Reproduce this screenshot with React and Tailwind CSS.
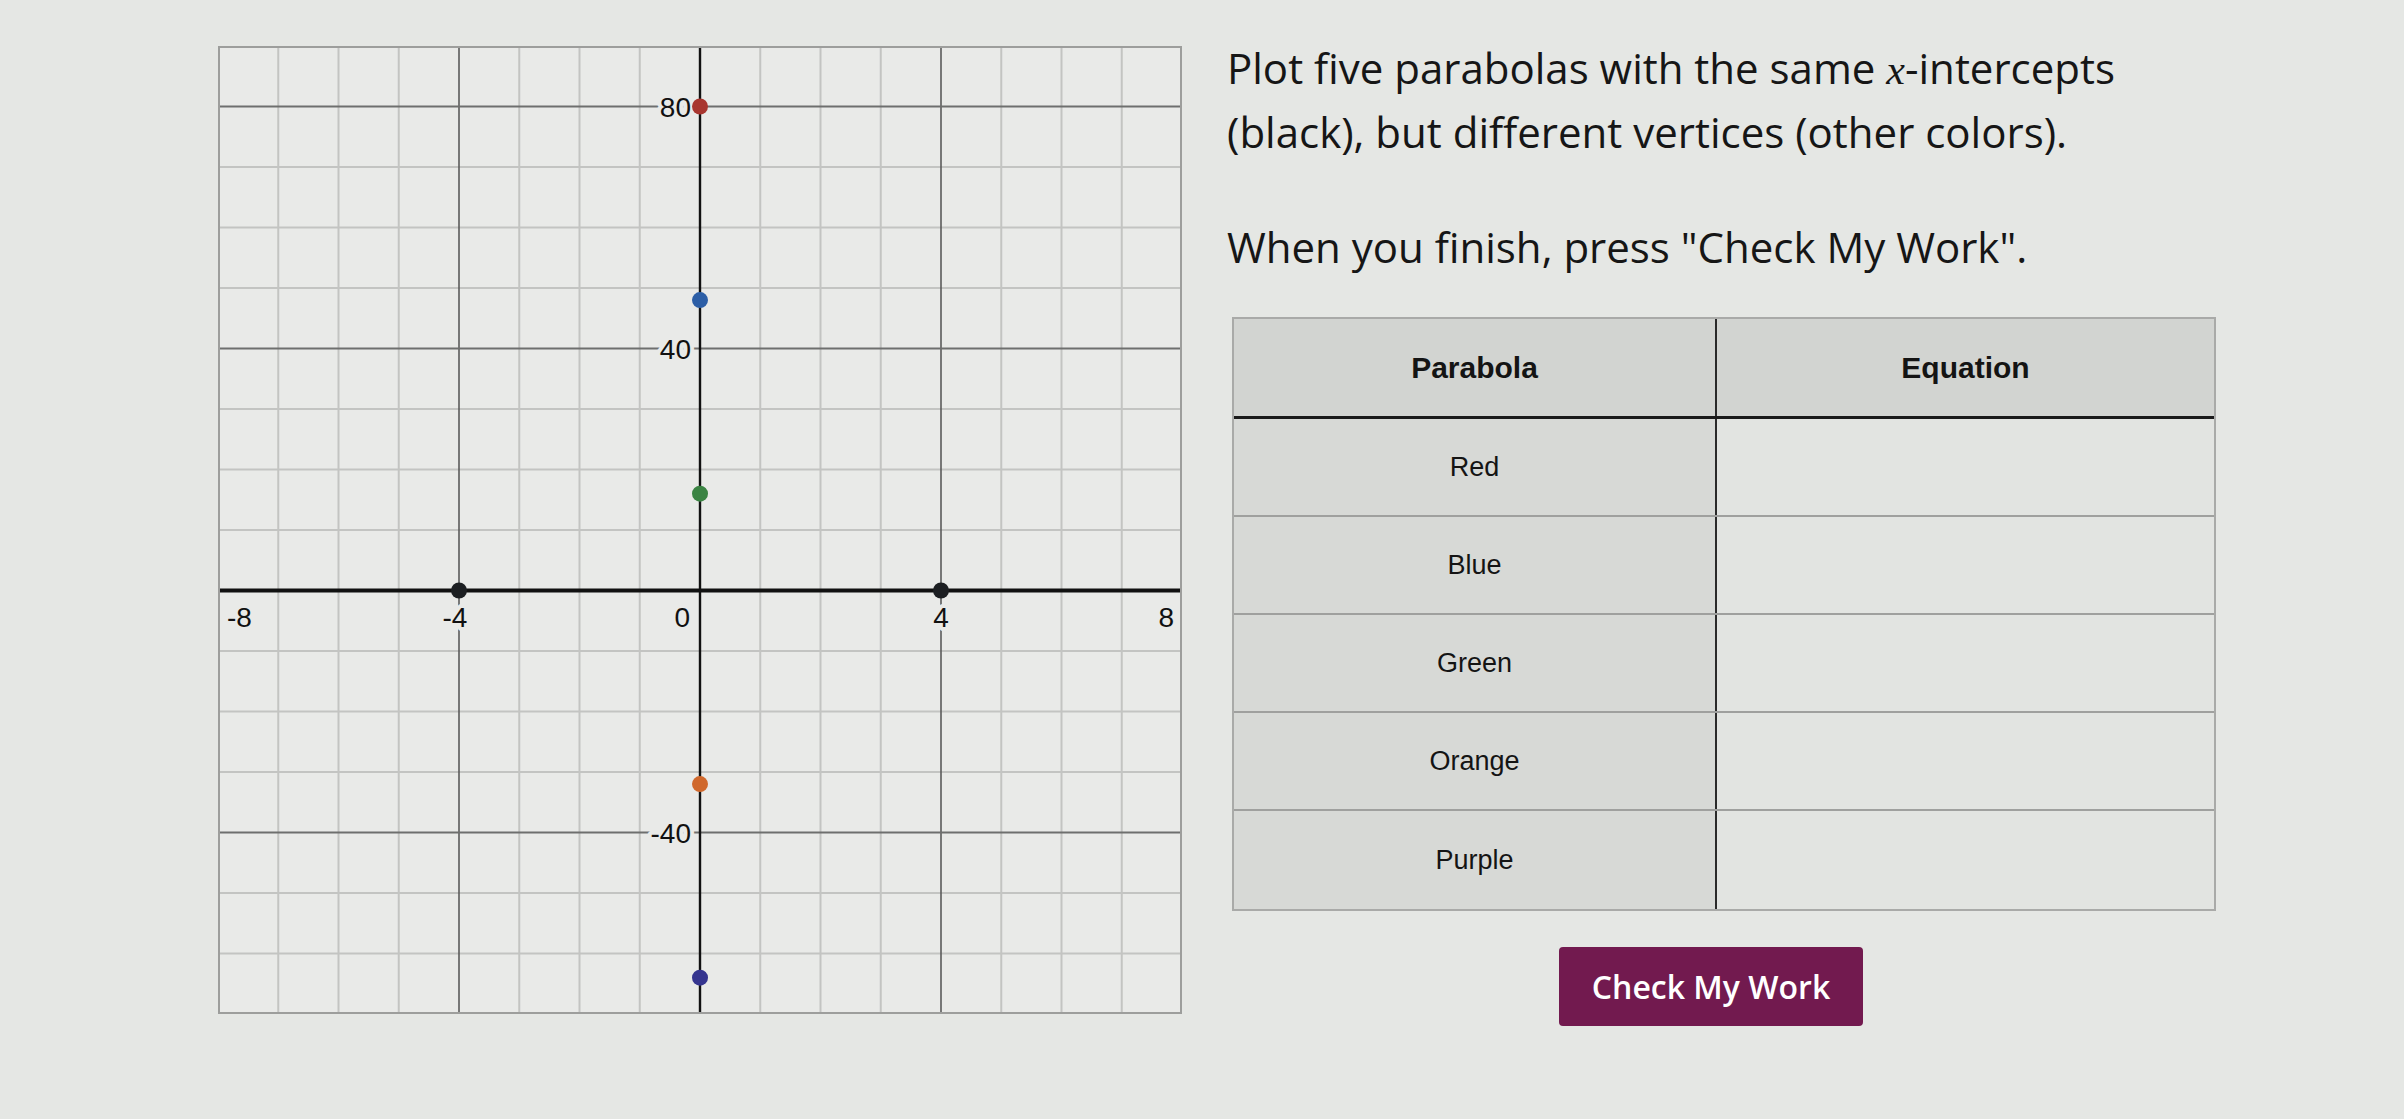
import React from "react";

const W = 964;
const H = 968;
const ux = W / 16;
const uy = H / 16;
const X = (x) => (x + 8) * ux;
const Y = (y) => ((90 - y) / 10) * uy;

function Graph() {
  const xs = [];
  for (let i = -8; i <= 8; i++) xs.push(i);
  const ys = [];
  for (let y = -70; y <= 90; y += 10) ys.push(y);
  const majorX = [-4, 4];
  const majorY = [80, 40, -40];
  const labelStyle = {
    fontFamily: '"Liberation Sans", Arial, sans-serif',
    fontSize: 28,
    fill: "#111",
    stroke: "#e9eae8",
    strokeWidth: 8,
    paintOrder: "stroke",
    strokeLinejoin: "round",
  };
  const dots = [
    { x: 0, y: 80, c: "#a8362f" },
    { x: 0, y: 48, c: "#2c5ea6" },
    { x: 0, y: 16, c: "#3b8443" },
    { x: 0, y: -32, c: "#d0682c" },
    { x: 0, y: -64, c: "#35358f" },
    { x: -4, y: 0, c: "#1c1f22" },
    { x: 4, y: 0, c: "#1c1f22" },
  ];
  return (
    <svg width={W} height={H} className="block shrink-0" viewBox={`0 0 ${W} ${H}`}>
      <rect x="0" y="0" width={W} height={H} fill="#e9eae8" />
      {xs.map((x) =>
        x === 0 || majorX.includes(x) ? null : (
          <line key={"vx" + x} x1={X(x)} x2={X(x)} y1={0} y2={H} stroke="#c3c4c2" strokeWidth="2" />
        )
      )}
      {ys.map((y) =>
        y === 0 || majorY.includes(y) ? null : (
          <line key={"hy" + y} x1={0} x2={W} y1={Y(y)} y2={Y(y)} stroke="#c3c4c2" strokeWidth="2" />
        )
      )}
      {majorX.map((x) => (
        <line key={"mx" + x} x1={X(x)} x2={X(x)} y1={0} y2={H} stroke="#5a5b5a" strokeWidth="1.6" />
      ))}
      {majorY.map((y) => (
        <line key={"my" + y} x1={0} x2={W} y1={Y(y)} y2={Y(y)} stroke="#6e6f6e" strokeWidth="2.2" />
      ))}
      <line x1={0} x2={W} y1={Y(0)} y2={Y(0)} stroke="#111" strokeWidth="4" />
      <line x1={X(0)} x2={X(0)} y1={0} y2={H} stroke="#111" strokeWidth="2.4" />
      <rect x="1" y="1" width={W - 2} height={H - 2} fill="none" stroke="#9d9e9c" strokeWidth="2" />

      {majorY.map((y) => (
        <text key={"ly" + y} x={X(0) - 9} y={Y(y) + 10} textAnchor="end" style={labelStyle}>
          {y}
        </text>
      ))}
      <text x={9} y={Y(0) + 36} textAnchor="start" style={labelStyle}>-8</text>
      <text x={X(-4) - 4} y={Y(0) + 36} textAnchor="middle" style={labelStyle}>-4</text>
      <text x={X(0) - 10} y={Y(0) + 36} textAnchor="end" style={labelStyle}>0</text>
      <text x={X(4)} y={Y(0) + 36} textAnchor="middle" style={labelStyle}>4</text>
      <text x={W - 8} y={Y(0) + 36} textAnchor="end" style={labelStyle}>8</text>

      {dots.map((d, i) => (
        <circle key={i} cx={X(d.x)} cy={Y(d.y)} r="8" fill={d.c} />
      ))}
    </svg>
  );
}

const rows = ["Red", "Blue", "Green", "Orange", "Purple"];

export default function App() {
  return (
    <div className="min-h-screen w-full bg-[#e5e7e4] flex items-start pl-[218px] pt-[37px]">
      <div className="mt-[9px] shrink-0">
        <Graph />
      </div>
      <div className="ml-[45px] w-[1050px] flex flex-col text-[#161616]">
        <p className="text-[42px] leading-[61px] font-['Open_Sans',sans-serif]">
          Plot five parabolas with the same{" "}
          <span className="italic font-['Liberation_Serif',serif]">x</span>-intercepts
          <br />
          (black), but different vertices (other colors).
        </p>
        <p className="mt-[54px] text-[42px] leading-[61px] font-['Open_Sans',sans-serif]">
          When you finish, press "Check My Work".
        </p>
        <div className="mt-[40px] ml-[5px] w-[984px] border-2 border-[#a9aaa8] font-['Liberation_Sans',Arial,sans-serif] text-[#141414]">
          <div className="flex h-[100px] bg-[#d2d4d1] border-b-[3px] border-[#1a1a1a]">
            <div className="w-[483px] flex items-center justify-center text-[30px] font-bold border-r-2 border-[#2a2a2a]">
              Parabola
            </div>
            <div className="flex-1 flex items-center justify-center text-[30px] font-bold">Equation</div>
          </div>
          {rows.map((r, i) => (
            <div
              key={r}
              className={
                "flex h-[98px] " + (i < rows.length - 1 ? "border-b-2 border-[#9fa09e]" : "")
              }
            >
              <div className="w-[483px] flex items-center justify-center text-[27px] bg-[#d7d9d6] border-r-2 border-[#2a2a2a]">
                {r}
              </div>
              <div className="flex-1 bg-[#e2e4e1]"></div>
            </div>
          ))}
        </div>
        <button className="mt-[36px] ml-[332px] w-[304px] h-[79px] rounded-[4px] bg-[#721a4f] text-white text-[32px] font-semibold font-['Open_Sans',sans-serif] flex items-center justify-center">
          Check My Work
        </button>
      </div>
    </div>
  );
}
